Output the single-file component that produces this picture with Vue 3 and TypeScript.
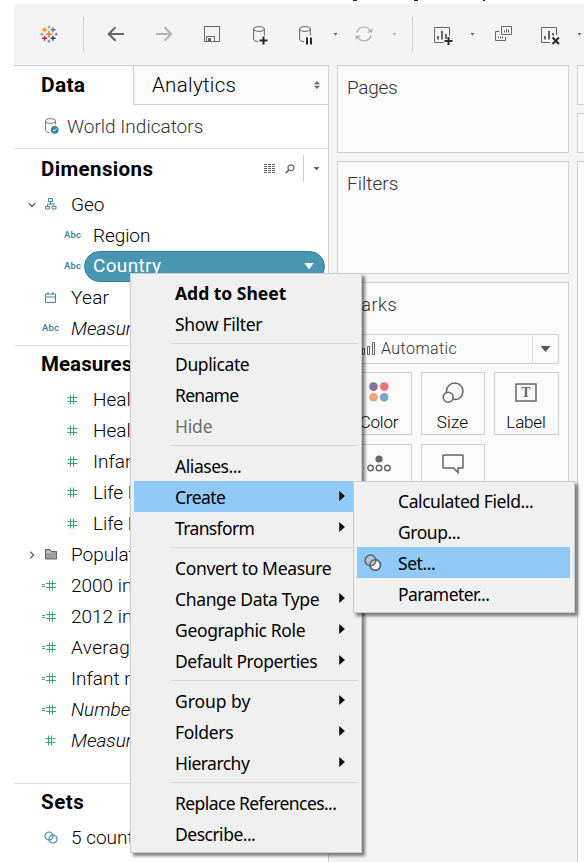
<script setup lang="ts">
interface Field { label: string; icon: string; level: 1 | 2; width?: number; italic?: boolean; selected?: boolean; twisty?: 'open' | 'closed' }
interface MenuItem { label?: string; width?: number; bold?: boolean; disabled?: boolean; active?: boolean; more?: boolean; icon?: boolean }

const dimensions: Field[] = [
  { label: 'Geo', icon: 'hierarchy', level: 1, width: 33, twisty: 'open' },
  { label: 'Region', icon: 'abc', level: 2, width: 57 },
  { label: 'Country', icon: 'abc', level: 2, width: 68, selected: true },
  { label: 'Year', icon: 'date', level: 1, width: 38 },
  { label: 'Measure Names', icon: 'abc', level: 1, italic: true },
]
const measures: Field[] = [
  { label: 'Health Exp % GDP', icon: 'number', level: 2 },
  { label: 'Health Exp/Capita', icon: 'number', level: 2 },
  { label: 'Infant Mortality Rate', icon: 'number', level: 2 },
  { label: 'Life Expectancy Female', icon: 'number', level: 2 },
  { label: 'Life Expectancy Male', icon: 'number', level: 2 },
  { label: 'Population', icon: 'folder', level: 1, twisty: 'closed' },
  { label: '2000 infant mortality', icon: 'calc', level: 1 },
  { label: '2012 infant mortality', icon: 'calc', level: 1 },
  { label: 'Average', icon: 'calc', level: 1, width: 69 },
  { label: 'Infant mortality', icon: 'calc', level: 1 },
  { label: 'Number of Records', icon: 'calc', level: 1, italic: true },
  { label: 'Measure Values', icon: 'number', level: 1, italic: true },
]
const sets: Field[] = [
  { label: '5 countries', icon: 'set', level: 1 },
  { label: 'Set 1', icon: 'set', level: 1 },
]
const sections = [
  { id: 'dimensions', title: 'Dimensions', width: 112, fields: dimensions },
  { id: 'measures', title: 'Measures', width: 91, fields: measures },
  { id: 'sets', title: 'Sets', width: 43, fields: sets },
]
const menu: MenuItem[] = [
  { label: 'Add to Sheet', width: 111, bold: true },
  { label: 'Show Filter', width: 87 },
  {},
  { label: 'Duplicate', width: 74 },
  { label: 'Rename', width: 63 },
  { label: 'Hide', width: 37, disabled: true },
  {},
  { label: 'Aliases...', width: 66 },
  { label: 'Create', width: 50, active: true, more: true },
  { label: 'Transform', width: 79, more: true },
  {},
  { label: 'Convert to Measure', width: 156 },
  { label: 'Change Data Type', width: 144, more: true },
  { label: 'Geographic Role', width: 130, more: true },
  { label: 'Default Properties', width: 142, more: true },
  {},
  { label: 'Group by', width: 75, more: true },
  { label: 'Folders', width: 58, more: true },
  { label: 'Hierarchy', width: 74, more: true },
  {},
  { label: 'Replace References...', width: 161 },
  { label: 'Describe...', width: 80 },
]
const submenu: MenuItem[] = [
  { label: 'Calculated Field...', width: 135 },
  { label: 'Group...', width: 62 },
  { label: 'Set...', width: 37, active: true, icon: true },
  { label: 'Parameter...', width: 91 },
]

// Tracks a label so that it spans the given number of pixels.
const vSpan = {
  mounted(el: HTMLElement, binding: { value?: number }) {
    if (!binding.value) return
    const n = (el.textContent ?? '').length
    el.style.letterSpacing = `${(binding.value + 0.3 - el.getBoundingClientRect().width) / n}px`
  },
}
</script>

<template>
  <div class="page">
    <div class="cut"><i></i><i></i><i></i></div>
    <div class="window">
      <div class="toolbar">
        <div class="tool w69">
          <svg width="18" height="18" viewBox="0 0 18 18" fill="none" stroke-width="1.4">
            <path d="M9 6v6.500M5.800 9.200h6.400" stroke="#eb7a35" stroke-width="1.600" />
            <path d="M4.600 2.200v5M2 4.700h5" stroke="#eb912c" /><path d="M13 2.200v5M10.600 4.700h5" stroke="#5b7f94" />
            <path d="M4.600 10.700v5M2 13.200h5" stroke="#c72035" /><path d="M13 10.700v5M10.600 13.200h5" stroke="#1f457e" />
            <path d="M9 .5v3M7.500 2h3M1.900 7.700v3M.4 9.200h3" stroke="#7099a5" stroke-width="1" />
            <path d="M9 14.700v3M7.500 16.200h3M16.200 7.700v3M14.700 9.200h3" stroke="#6f75a5" stroke-width="1" />
          </svg>
        </div>
        <div class="rule gap8"></div>
        <div class="tool w48"><svg width="18" height="16" viewBox="0 0 18 16" fill="none" stroke="#666" stroke-width="2"><path d="M17 8H2M8.500 1.200 1.700 8l6.800 6.800" /></svg></div>
        <div class="tool w48"><svg width="18" height="16" viewBox="0 0 18 16" fill="none" stroke="#b5b5b5" stroke-width="2"><path d="M1 8h15M9.500 1.200 16.300 8l-6.800 6.800" /></svg></div>
        <div class="tool w48"><svg width="16" height="16" viewBox="0 0 16 16" fill="none" stroke="#666"><path d="M.5.5h15v15H.5zM2.500 15.500v-5h8v5" /><path d="M4 12h3v3H4z" fill="#666" stroke="none" /></svg></div>
        <div class="tool w48">
          <svg class="low" width="15" height="19" viewBox="0 0 15 19" fill="none" stroke="#666"><ellipse cx="6" cy="3" rx="5.400" ry="2.400" /><path d="M.6 3v10c0 1.500 1.500 2.500 4.400 2.500M11.400 3v6.500" /><path d="M10.500 10.500v8M6.500 14.500h8" stroke="#2a2a2a" stroke-width="2" /></svg>
        </div>
        <div class="tool w44">
          <svg class="low" width="14" height="19" viewBox="0 0 14 19" fill="none" stroke="#666"><ellipse cx="6" cy="3" rx="5.400" ry="2.400" /><path d="M.6 3v10c0 1.500 1.500 2.500 4.400 2.500M11.400 3v6.500" /><path d="M8 11.500v7M12 11.500v7" stroke="#2a2a2a" stroke-width="2" /></svg>
        </div>
        <div class="tool w15"><b class="caret"></b></div>
        <div class="tool w42">
          <svg width="18" height="16" viewBox="0 0 18 16" fill="none" stroke="#b5b5b5" stroke-width="1.400"><path d="M2 6.500a7 7 0 0 1 13.500-.5M16 9.500a7 7 0 0 1-13.500.5" /><path d="M12 6.500h5.500V2zM6 9.500H.5V14z" fill="#b5b5b5" stroke="none" /></svg>
        </div>
        <div class="tool w19"><b class="caret pale"></b></div>
        <div class="rule lead8"></div>
        <div class="tool w46">
          <svg class="low" width="20" height="19" viewBox="0 0 20 19" fill="none" stroke="#666"><path d="M16.500 10V1.500H1.500v15H11" /><path d="M5 13.500V10M9 13.500V5M13 13V8" stroke-width="2" /><path d="M15.500 11v8M11.500 15h8" stroke="#2a2a2a" stroke-width="2" /></svg>
        </div>
        <div class="tool w13"><b class="caret"></b></div>
        <div class="tool w49">
          <svg class="high" width="17" height="17" viewBox="0 0 17 17" fill="none" stroke="#666"><path d="M6.500 1.500h10v8h-10zM4.500 6.500h-4v9h10v-3.500M9.500 7.500V5.500M11.500 7.500v-4M13.500 7.500v-3M3.500 13.500v-2M5.500 13.500v-2M7.500 13.500v-2" /></svg>
        </div>
        <div class="tool w44">
          <svg class="low" width="20" height="19" viewBox="0 0 20 19" fill="none" stroke="#666"><path d="M16.500 9V1.500H1.500v15H10" /><path d="M5 13.500V10M9 13.500V5M13 9.500V7" stroke-width="2" /><path d="m12.500 11.500 6.500 6.500M19 11.500 12.500 18" stroke="#2a2a2a" stroke-width="2" /></svg>
        </div>
        <div class="tool w15"><b class="caret"></b></div>
      </div>

      <div class="workspace">
        <aside class="data-pane">
          <div class="tabs">
            <div class="tab current"><span v-span="44">Data</span></div>
            <div class="tab other"><span v-span="84">Analytics</span>
              <svg width="6" height="8" viewBox="0 0 6 8" fill="#5b6b78"><path d="M3 0 6 3.200H0zM3 8 0 4.800h6z" /></svg>
            </div>
          </div>
          <div class="source">
            <svg width="15" height="17" viewBox="0 0 15 17" fill="none" stroke="#777"><ellipse cx="5.500" cy="3" rx="4.900" ry="2.300" /><path d="M.6 3v9.500c0 1.200 1.500 2 4 2.200M10.400 3v3.500" /><circle cx="9.700" cy="11.800" r="3.900" fill="#3d84a3" stroke="none" /><path d="m7.900 11.900 1.300 1.300 2.300-2.600" stroke="#fff" /></svg>
            <span v-span="136">World Indicators</span>
          </div>

          <section v-for="section in sections" :key="section.id" :class="['section', section.id]">
            <header><span v-span="section.width">{{ section.title }}</span>
              <div v-if="section.id === 'dimensions'" class="actions">
                <svg width="12" height="9" viewBox="0 0 12 9" stroke="#666"><path d="M0 .5h12M0 2.500h12M0 4.500h12M0 6.500h12M0 8.500h12" stroke-dasharray="3 1 3 1 3 1" /></svg>
                <svg class="find" width="10" height="10" viewBox="0 0 10 10" fill="none" stroke="#666"><circle cx="6" cy="3.800" r="3" stroke-width="1.200" /><path d="M3.800 6 .7 9.100" stroke-width="1.700" /></svg>
                <i class="bar"></i><b class="caret wide"></b>
              </div>
            </header>
            <div v-for="field in section.fields" :key="field.label" :class="['field', 'level' + field.level]">
              <span class="twisty">
                <svg v-if="field.twisty" width="8" height="8" viewBox="0 0 8 8" fill="none" stroke="#666" stroke-width="1.400"><path :d="field.twisty === 'open' ? 'M.7 2.300 4 5.600l3.300-3.300' : 'M2.300.7 5.600 4 2.300 7.300'" /></svg>
              </span>
              <span class="glyph">
                <span v-if="field.icon === 'abc'" class="abc">Abc</span>
                <svg v-else-if="field.icon === 'hierarchy'" width="12" height="12" viewBox="0 0 12 12" fill="none" stroke="#4489a7"><path d="M3.500.5h4v3h-4zM.5 8.500h4v2.500h-4zM7 8.500h4v2.500H7zM5.500 3.500v2.500M2.500 8.500V6h6.500v2.500" /></svg>
                <svg v-else-if="field.icon === 'date'" width="11" height="11" viewBox="0 0 11 11" fill="none" stroke="#4489a7"><path d="M.5 2h10v8.500H.5zM.5 5h10M3 0v3M8 0v3" /></svg>
                <svg v-else-if="field.icon === 'number'" width="11" height="11" viewBox="0 0 11 11" fill="none" stroke="#3da37d"><path d="M3.500.5v10M6.500.5v10M.5 3.500h10M.5 7.500h10" /></svg>
                <svg v-else-if="field.icon === 'calc'" class="calc" width="14" height="11" viewBox="0 0 14 11" fill="none" stroke="#3da37d"><path d="M7.500.5v10M10.500.5v10M4 3.500h10M4 7.500h10M0 4.500h3M0 6.500h3" /></svg>
                <svg v-else-if="field.icon === 'folder'" width="12" height="11" viewBox="0 0 12 11" fill="#98a0a9" stroke="#666"><path d="M.5 10V.5H5L6 2.500h5.500V10z" /><path d="M1 3h5" stroke="#ddd" /></svg>
                <svg v-else width="14" height="13" viewBox="0 0 14 13" fill="none" stroke="#4489a7" stroke-width="1.200"><circle cx="5" cy="5" r="4" /><circle cx="9" cy="8" r="4" /></svg>
              </span>
              <div :class="['name', { pill: field.selected, italic: field.italic }]"><span v-span="field.width">{{ field.label }}</span><b v-if="field.selected" class="caret light"></b></div>
            </div>
          </section>
        </aside>

        <div class="shelves">
          <div class="card pages"><span v-span="50">Pages</span></div>
          <div class="card filters"><span v-span="51">Filters</span></div>
          <div class="card marks">
            <span v-span="52" class="marks-title">Marks</span>
            <div class="mark-type">
              <svg width="17" height="14" viewBox="0 0 17 14" fill="none" stroke="#666"><path d="M4.500 6.500h2v6h-2zM9.500 4.500h2v8h-2zM14.500.5h2v12h-2z" /></svg>
              <span v-span="76">Automatic</span><div class="drop"><b class="caret big"></b></div>
            </div>
            <div class="mark-grid">
              <div class="mark first"><svg width="20" height="20" viewBox="0 0 20 20"><circle cx="4.500" cy="4.600" r="4.300" fill="#85709a" /><circle cx="15.200" cy="4.600" r="4.300" fill="#f66e7b" /><circle cx="4.500" cy="15.200" r="4.300" fill="#f3a47b" /><circle cx="15.200" cy="15.200" r="4.300" fill="#7ea3cc" /></svg><span v-span="38">Color</span></div>
              <div class="mark"><svg width="22" height="22" viewBox="0 0 22 22" fill="none" stroke="#666" stroke-width="1.500"><circle cx="12.700" cy="9.300" r="8.300" /><circle cx="6.200" cy="15.200" r="5" fill="#fafafa" /></svg><span v-span="31">Size</span></div>
              <div class="mark"><svg class="down" width="22" height="19" viewBox="0 0 22 19"><path d="M1 1h20v17H1z" fill="none" stroke="#666" stroke-width="1.500" /><text x="11" y="14.200" text-anchor="middle" fill="#666" font-family="Liberation Serif, serif" font-size="14" font-weight="700">T</text></svg><span v-span="39">Label</span></div>
              <div class="mark first"><svg class="down" width="24" height="18" viewBox="0 0 24 18" fill="none" stroke="#666" stroke-width="1.400"><circle cx="12" cy="4" r="3.600" fill="#666" stroke="none" /><circle cx="3.600" cy="13" r="2.800" /><circle cx="12" cy="13" r="2.800" /><circle cx="20.400" cy="13" r="2.800" /></svg><span>Detail</span></div>
              <div class="mark"><svg width="22" height="20" viewBox="0 0 22 20" fill="none" stroke="#666" stroke-width="1.500"><path d="M1.500 1h19q.5 0 .5.500v12q0 .5-.5.500h-4.500v4.500L11.500 14h-10q-.5 0-.5-.5v-12Q1 1 1.500 1z" /></svg><span>Tooltip</span></div>
            </div>
          </div>
        </div>

        <div class="sheet"><div class="shelf"></div><div class="shelf"></div><div class="canvas"></div></div>
      </div>
    </div>

    <nav class="menu context">
      <template v-for="(item, i) in menu" :key="i">
        <div v-if="item.label" :class="['item', { active: item.active, bold: item.bold, disabled: item.disabled }]">
          <span v-span="item.width">{{ item.label }}</span>
          <svg v-if="item.more" class="more" width="6" height="10" viewBox="0 0 6 10"><path d="M.5.5v9L5.500 5z" stroke="#000" stroke-width=".5" /></svg>
        </div>
        <div v-else class="divider"></div>
      </template>
    </nav>
    <nav class="menu sub">
      <div v-for="item in submenu" :key="item.label" :class="['item', { active: item.active }]">
        <svg v-if="item.icon" class="venn" width="18" height="18" viewBox="0 0 18 18" stroke="#56687a" stroke-width="1.500"><circle cx="11.200" cy="11" r="5.300" fill="#fff" /><circle cx="6.500" cy="6.500" r="5.400" fill="#b9c3cb" fill-opacity=".85" /><circle cx="11.200" cy="11" r="5.300" fill="none" /></svg>
        <span v-span="item.width">{{ item.label }}</span>
      </div>
    </nav>
  </div>
</template>

<style scoped>
.page { position: relative; width: 584px; height: 862px; overflow: hidden; background: #fff; font-family: Roboto, "Liberation Sans", sans-serif; font-weight: 300; font-size: 19px; line-height: 24px; color: #000; }
.page *, .page { box-sizing: border-box; }
.page span { white-space: nowrap; }
svg { display: block; flex: none; }
.cut { display: flex; height: 4px; padding-left: 353px; gap: 57px; }
.cut i { width: 4px; height: 1px; background: #222; }
.cut i:last-child { width: 2px; margin-left: 8px; }
.window { margin-left: 14px; height: 858px; width: 573px; background: #f4f4f4; display: flex; flex-direction: column; }
.toolbar { display: flex; height: 61px; flex: none; align-items: center; padding-bottom: 1px; }
.tool { flex: none; display: flex; justify-content: center; align-items: center; }
.low { margin-top: 2px; }
.high { margin-bottom: 2px; }
.down { margin-top: 1px; }
.w13 { width: 13px; } .w15 { width: 15px; } .w19 { width: 19px; } .w42 { width: 42px; } .w44 { width: 44px; }
.w46 { width: 46px; } .w48 { width: 48px; } .w49 { width: 49px; } .w69 { width: 69px; }
.rule { width: 1px; height: 35px; background: #cfcfcf; flex: none; }
.gap8 { margin-right: 8px; }
.lead8 { margin: 0 7px 0 8px; }
.caret { display: block; width: 5px; height: 3px; background: #666; clip-path: polygon(0 0, 100% 0, 50% 100%); }
.caret.pale { background: #b5b5b5; }
.caret.wide { width: 7px; height: 4px; }
.caret.big { width: 10px; height: 6px; background: #555; }
.caret.light { width: 10px; height: 7px; background: #fff; }
.workspace { display: flex; flex: 1; min-height: 0; }
.data-pane { width: 315px; flex: none; background: #fff; border-top: 1px solid #cfcfcf; border-right: 1px solid #cfcfcf; overflow: hidden; }
.tabs { display: flex; height: 39px; }
.tab { font-size: 20.500px; display: flex; align-items: center; }
.current { width: 119px; padding: 0 0 2px 27px; font-size: 21px; font-weight: 700; }
.other { flex: 1; padding: 0 8px 0 18px; justify-content: space-between; border-left: 1px solid #cfcfcf; border-bottom: 1px solid #cfcfcf; background: #fafafa; }
.source { display: flex; align-items: center; height: 44px; padding-left: 31px; gap: 7px; color: #333; border-bottom: 1px solid #e0e0e0; }
.section header { height: 40px; padding-left: 27px; font-size: 20.500px; font-weight: 700; display: flex; align-items: center; justify-content: space-between; }
.section { border-bottom: 1px solid #e0e0e0; }
.dimensions { height: 197px; }
.measures { height: 438px; }
.measures header, .sets header { height: 38px; padding-bottom: 2px; }
.actions { display: flex; align-items: center; padding: 0 8px 1px 0; }
.find { margin-left: 9px; }
.bar { width: 1px; height: 27px; margin: 0 9px 0 8px; background: #cfcfcf; }
.field { display: flex; align-items: center; height: 31px; }
.twisty { box-sizing: content-box; width: 8px; padding-left: 14px; flex: none; }
.glyph { width: 29px; flex: none; display: flex; justify-content: center; padding-bottom: 1px; }
.level2 .glyph { margin-left: 22px; }
.abc { font-family: Roboto, sans-serif; font-size: 9.500px; font-weight: 500; line-height: 12px; color: #37809f; letter-spacing: .15px; }
.calc { margin-left: -4px; }
.name { height: 31px; display: flex; align-items: center; padding-left: 6px; }
.italic { font-style: italic; }
.name.pill { flex: none; width: 241px; height: 31px; margin: -1px 0 0 -3px; padding: 1px 10px 1px 8px; justify-content: space-between; color: #fff; font-weight: 400; background: #4996b2; border: 1px solid #36809d; border-radius: 15.500px; }
.shelves { width: 232px; margin-left: 8px; flex: none; display: flex; flex-direction: column; gap: 8px; color: #333; }
.card { flex: none; border: 1px solid #cfcfcf; background: #fafafa; padding: 10px 9px 0; }
.pages { height: 88px; }
.filters { height: 113px; }
.marks { height: 240px; padding-right: 9px; padding-left: 10px; }
.marks-title { display: inline-block; height: 24px; margin-left: -3px; font-size: 18px; vertical-align: top; }
.mark-type { display: flex; align-items: center; height: 30px; margin-top: 17px; border: 1px solid #cfcfcf; border-radius: 2px; font-size: 16px; padding-left: 9px; }
.mark-type span { margin-left: 6px; }
.drop { margin-left: auto; width: 26px; height: 28px; display: flex; align-items: center; justify-content: center; border-left: 1px solid #dcdcdc; }
.mark-grid { display: grid; grid-template-columns: 64px 64px 65px; column-gap: 9px; row-gap: 9px; margin-top: 8px; }
.mark { height: 63px; border: 1px solid #cfcfcf; font-size: 17px; color: #000; display: flex; flex-direction: column; align-items: center; justify-content: space-between; padding: 9px 1px 0 0; }
.mark.first { padding-right: 2px; }
.sheet { flex: 1; margin-left: 8px; display: flex; flex-direction: column; gap: 8px; }
.shelf { height: 40px; border: 1px solid #cfcfcf; background: #fafafa; flex: none; }
.canvas { flex: 1; background: #fff; border: 1px solid #cfcfcf; border-bottom: 0; }
.menu { position: absolute; border: 1px solid #ccc; background: #f0f0f0; padding: 3px; font-family: "Noto Sans", "Open Sans", sans-serif; font-weight: 400; font-size: 17.500px; box-shadow: 3px 3px 3px rgba(0, 0, 0, .5); }
.context { left: 130px; top: 273px; width: 232px; height: 580px; }
.sub { left: 353px; top: 481px; width: 222px; height: 132px; padding-right: 4px; }
.item { height: 31px; display: flex; align-items: center; justify-content: space-between; padding: 1px 13px 0 41px; }
.more { margin-bottom: 2px; }
.sub .item { position: relative; }
.active { background: #91c9f7; }
.bold { font-weight: 700; }
.disabled { color: #6d6d6d; }
.divider { height: 1px; margin: 4px 0 4px 37px; background: #d7d7d7; }
.venn { position: absolute; left: 7px; top: 7px; }
</style>
